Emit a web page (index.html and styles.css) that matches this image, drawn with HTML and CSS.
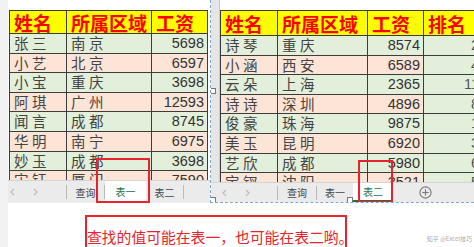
FILE: index.html
```html
<!DOCTYPE html>
<html lang="zh-CN">
<head>
  <meta charset="UTF-8" />
  <meta name="viewport" content="width=device-width, initial-scale=1.0"/>
  <title>查找表一表二</title>
  <link rel="stylesheet" href="styles.css">
</head>
<body>
<div class="shots">
  <div class="shot shot-left">
    <div class="sheet">
      <div class="grid grid-left">
        <div class="row head"><span>姓名</span><span>所属区域</span><span>工资</span></div>
        <div class="row g"><span>张三</span><span>南京</span><span class="num">5698</span></div>
        <div class="row p"><span>小艺</span><span>北京</span><span class="num">6597</span></div>
        <div class="row g"><span>小宝</span><span>重庆</span><span class="num">3698</span></div>
        <div class="row p"><span>阿琪</span><span>广州</span><span class="num">12593</span></div>
        <div class="row g"><span>闻言</span><span>成都</span><span class="num">8745</span></div>
        <div class="row p"><span>华明</span><span>南宁</span><span class="num">6975</span></div>
        <div class="row g"><span>妙玉</span><span>成都</span><span class="num">3698</span></div>
        <div class="row p"><span>宋钰</span><span>厦门</span><span class="num">7590</span></div>
      </div>
    </div>
    <div class="tabs">
      <div class="tab-nav nav-left">
        <svg width="5" height="8" viewBox="0 0 5 8"><polyline points="4,1 1,4 4,7" /></svg>
        <svg width="5" height="8" viewBox="0 0 5 8"><polyline points="1,1 4,4 1,7" /></svg>
      </div>
      <i class="sep"></i>
      <span class="tab w37">查询</span>
      <i class="sep"></i>
      <span class="tab active w41">表一</span>
      <span class="tab w37">表二</span>
      <i class="sep"></i>
    </div>
    <div class="mark mark-left"></div>
  </div>

  <div class="shot shot-right">
    <div class="sheet sheet-right">
      <div class="rowhead"></div>
      <div class="grid grid-right">
        <div class="row head"><span>姓名</span><span>所属区域</span><span>工资</span><span class="rank">排名</span></div>
        <div class="row g"><span>诗琴</span><span>重庆</span><span class="num">8574</span><span class="num rank">2</span></div>
        <div class="row p"><span>小涵</span><span>西安</span><span class="num">6589</span><span class="num rank">4</span></div>
        <div class="row g"><span>云朵</span><span>上海</span><span class="num">2365</span><span class="num rank">11</span></div>
        <div class="row p"><span>诗诗</span><span>深圳</span><span class="num">4896</span><span class="num rank">8</span></div>
        <div class="row g"><span>俊豪</span><span>珠海</span><span class="num">9875</span><span class="num rank">1</span></div>
        <div class="row p"><span>美玉</span><span>昆明</span><span class="num">6920</span><span class="num rank">3</span></div>
        <div class="row g"><span>艺欣</span><span>成都</span><span class="num">5980</span><span class="num rank">6</span></div>
        <div class="row p"><span>宝钗</span><span>沈阳</span><span class="num">3521</span><span class="num rank">5</span></div>
      </div>
    </div>
    <div class="tabs">
      <div class="tab-nav nav-right">
        <svg width="5" height="8" viewBox="0 0 5 8"><polyline points="4,1 1,4 4,7" /></svg>
        <svg width="5" height="8" viewBox="0 0 5 8"><polyline points="1,1 4,4 1,7" /></svg>
      </div>
      <i class="sep"></i>
      <span class="tab w38">查询</span>
      <i class="sep"></i>
      <span class="tab w36">表一</span>
      <span class="tab active w40">表二</span>
      <svg class="add" width="13" height="13" viewBox="0 0 13 13">
        <circle cx="6.5" cy="6.5" r="5.6" />
        <line x1="6.5" y1="3.3" x2="6.5" y2="9.7" />
        <line x1="3.3" y1="6.5" x2="9.7" y2="6.5" />
      </svg>
    </div>
    <div class="mark mark-right"></div>
    <i class="handle h-side"></i>
    <i class="handle h-corner"></i>
    <i class="handle h-bottom"></i>
  </div>
</div>

<div class="note">查找的值可能在表一，也可能在表二哟。</div>
<div class="watermark">知乎 @Excel技巧</div>
</body>
</html>
```

FILE: styles.css
```css
:root {
  --green: #e2efda;
  --pink: #fce4d6;
  --head: #ffff00;
  --red: #ff0000;
  --line: #3c3c3c;
  --tabbar: #ebebeb;
  --excel: #217346;
  --mark: #e8232b;
  --dash: #7aa6d9;
}
body {
  margin: 0;
  width: 474px;
  height: 247px;
  overflow: hidden;
  position: relative;
  font-family: "Noto Sans CJK SC", "Liberation Sans", sans-serif;
  background: linear-gradient(to right, #f2f2f2 8px, #fff 8px);
  color: #333;
}
.shots {
  display: flex;
  height: 203px;
}
.shot {
  position: relative;
  display: flex;
  flex-direction: column;
}
.shot-left {
  width: 210px;
  padding-left: 9px;
  box-sizing: border-box;
}
.shot-right {
  flex: 1;
  border-left: 1px dashed var(--dash);
  border-bottom: 1px dashed var(--dash);
  overflow: hidden;
  background: #fff;
}
.sheet {
  height: 180px;
  flex: none;
  padding-top: 10px;
  box-sizing: border-box;
  overflow: hidden;
  background: #fff;
}
.sheet-right {
  height: 182px;
  display: flex;
}
.rowhead {
  width: 9px;
  flex: none;
  background: #e6e6e6;
  border-right: 1px solid #c9c9c9;
  box-sizing: border-box;
  margin-top: -10px;
  height: calc(100% + 10px);
}
.grid {
  display: grid;
  gap: 1px;
  padding: 1px;
  background: var(--line);
  align-self: flex-start;
  flex: none;
}
.grid-left {
  width: max-content;
  grid-template-columns: 56px 84px 55px;
  grid-template-rows: 22px;
  grid-auto-rows: 18.6px;
}
.grid-right {
  grid-template-columns: 56px 89px 55px 55px;
  grid-template-rows: 24px;
  grid-auto-rows: 18.6px;
}
.row { display: contents; }
.row span {
  display: flex;
  align-items: center;
  padding: 0 4px;
  font-size: 14.5px;
  line-height: 1;
  letter-spacing: 3.5px;
  white-space: nowrap;
  overflow: hidden;
  color: #444;
}
.row.g span { background: var(--green); }
.row.p span { background: var(--pink); }
.row span.rank { background: var(--green); }
.row.head span {
  background: var(--head);
  color: var(--red);
  font-weight: 700;
  font-size: 19px;
  letter-spacing: 0;
}
.row span.num {
  justify-content: flex-end;
  padding-right: 3px;
  font-family: "Liberation Sans", sans-serif;
  font-size: 14.5px;
  letter-spacing: 0;
  color: #333;
}
.row span.num.rank { color: #555; padding-right: 0; }

.tabs {
  flex: 1;
  display: flex;
  align-items: stretch;
  background: var(--tabbar);
  border-top: 1px solid #d4d4d4;
  font-size: 10px;
  color: #444;
}
.shot-left .tabs { margin-left: -1px; }
.tab-nav {
  display: flex;
  align-items: center;
  gap: 18px;
}
.nav-left { width: 58px; padding-left: 2px; box-sizing: border-box; }
.nav-right { width: 66px; padding-left: 11px; box-sizing: border-box; }
.tab-nav polyline {
  fill: none;
  stroke: #bdbdbd;
  stroke-width: 1.2;
}
.sep {
  width: 1px;
  height: 14px;
  align-self: center;
  background: #b9b9b9;
}
.tab {
  display: flex;
  align-items: center;
  justify-content: center;
}
.w36 { width: 36px; }
.w37 { width: 37px; }
.w38 { width: 38px; }
.w40 { width: 40px; }
.w41 { width: 41px; }
.tab.active {
  background: #fff;
  color: var(--excel);
  border-bottom: 2px solid var(--excel);
  box-sizing: border-box;
}
.add {
  align-self: center;
  margin-left: 26px;
}
.add circle, .add line {
  fill: none;
  stroke: #7a7a7a;
  stroke-width: 1.1;
}

.mark {
  position: absolute;
  border: 2px solid var(--mark);
  box-sizing: border-box;
}
.mark-left { left: 96px; top: 158px; width: 54px; height: 45px; }
.mark-right { left: 147px; top: 160px; width: 35px; height: 43px; }

.handle {
  position: absolute;
  width: 4px;
  height: 4px;
  background: #fff;
  border: 1px solid #777;
}
.h-side { left: -1px; top: 88px; }
.h-corner { left: -1px; bottom: -1px; }
.h-bottom { left: 136px; bottom: -1px; }

.note {
  margin: 12px 0 0 85px;
  width: 262px;
  height: 40px;
  box-sizing: border-box;
  border: 2px solid var(--mark);
  padding-top: 10px;
  font-size: 14.8px;
  line-height: 20px;
  color: #e8232b;
  white-space: nowrap;
  overflow: hidden;
}
.watermark {
  position: absolute;
  right: 2px;
  bottom: 4px;
  font-size: 6px;
  color: #aaa;
}
```
